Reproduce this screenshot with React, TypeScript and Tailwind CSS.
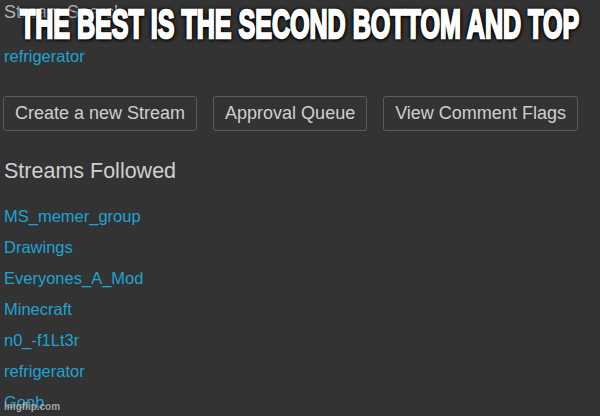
import React from "react";

const streams = [
  "MS_memer_group",
  "Drawings",
  "Everyones_A_Mod",
  "Minecraft",
  "n0_-f1Lt3r",
  "refrigerator",
  "Gonb",
];

export default function App() {
  return (
    <div className="relative h-[416px] w-[600px] overflow-hidden bg-[#333333] font-['Liberation_Sans',Arial,sans-serif]">
      <div className="flex flex-col px-[3px] pt-[2px]">
        <h1 className="text-[18px] leading-[20px] font-normal text-[#b4b4b4] pl-[1px]">Stream Search</h1>
        <a className="mt-[24px] pl-[1px] text-[16.5px] leading-[20px] text-[#1fa3d1]">refrigerator</a>
        <div className="mt-[30px] flex gap-[16px]">
          {["Create a new Stream", "Approval Queue", "View Comment Flags"].map((b) => (
            <button
              key={b}
              className="rounded-[3px] border border-[#5c5c5c] bg-[#333333] px-[11px] py-[6px] text-[18px] leading-[21px] text-[#cfcfcf]"
            >
              {b}
            </button>
          ))}
        </div>
        <h2 className="mt-[28px] pl-[1px] text-[21.5px] leading-[24px] font-normal text-[#cfcfcf]">Streams Followed</h2>
        <ul className="mt-[18px] flex flex-col">
          {streams.map((s) => (
            <li key={s} className="pl-[1px] text-[16.5px] leading-[31px] text-[#1fa3d1]">
              {s}
            </li>
          ))}
        </ul>
      </div>

      <div className="absolute left-0 right-0 top-[6px] flex justify-center">
        <div className="scale-x-[0.665] scale-y-[1.08] whitespace-nowrap text-[37.7px] leading-none font-bold text-white [-webkit-text-stroke:2.2px_white] [text-shadow:0_0_4px_#000,0_0_4px_#000,0_0_6px_#000,1px_2px_4px_#000]">
          THE BEST IS THE SECOND BOTTOM AND TOP
        </div>
      </div>

      <div className="absolute bottom-[4px] left-[4px] text-[10px] leading-none font-bold text-white/60 [text-shadow:0_0_2px_rgba(0,0,0,0.5)]">
        imgflip.com
      </div>
    </div>
  );
}
